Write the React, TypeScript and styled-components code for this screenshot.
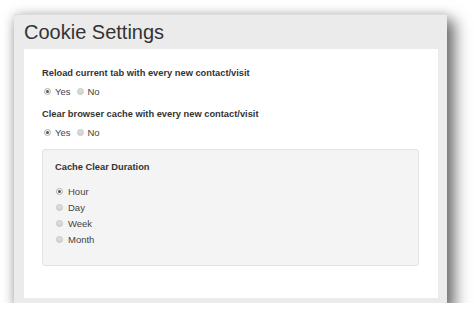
import styled, { createGlobalStyle } from 'styled-components';

const GlobalStyle = createGlobalStyle`
  html, body {
    margin: 0;
    padding: 0;
    background: #ffffff;
  }

  body {
    font-family: "Liberation Sans", Arial, sans-serif;
    color: #333333;
  }
`;

interface Choice {
  label: string;
  checked: boolean;
}

const reloadChoices: Choice[] = [
  { label: 'Yes', checked: true },
  { label: 'No', checked: false },
];

const durations: Choice[] = [
  { label: 'Hour', checked: true },
  { label: 'Day', checked: false },
  { label: 'Week', checked: false },
  { label: 'Month', checked: false },
];

function RadioOption({ label, checked }: Choice) {
  return (
    <Option>
      <Dot $checked={checked} />
      <span>{label}</span>
    </Option>
  );
}

function App() {
  return (
    <>
      <GlobalStyle />
      <Page>
        <Panel>
          <Header>Cookie Settings</Header>
          <Body>
            <FieldLabel>Reload current tab with every new contact/visit</FieldLabel>
            <InlineRow>
              {reloadChoices.map((c) => (
                <RadioOption key={c.label} {...c} />
              ))}
            </InlineRow>

            <FieldLabel $top={8}>Clear browser cache with every new contact/visit</FieldLabel>
            <InlineRow>
              {reloadChoices.map((c) => (
                <RadioOption key={c.label} {...c} />
              ))}
            </InlineRow>

            <Well>
              <WellTitle>Cache Clear Duration</WellTitle>
              <StackList>
                {durations.map((c) => (
                  <RadioOption key={c.label} {...c} />
                ))}
              </StackList>
            </Well>
          </Body>
        </Panel>
      </Page>
    </>
  );
}

export default App;

const Page = styled.div`
  padding: 14px 0 0 14px;
`;

const Panel = styled.div`
  display: flex;
  flex-direction: column;

  width: 433px;
  height: 289px;
  background-color: #ebebeb;
  border-top: 1px solid #dcdcdc;
  box-sizing: border-box;
  box-shadow: 0 0 10px rgba(0, 0, 0, 0.12), 6px 8px 14px 2px rgba(0, 0, 0, 0.55);
`;

const Header = styled.div`
  display: flex;
  align-items: center;

  height: 34px;
  padding-left: 10px;

  font-size: 20px;
  color: #333333;
`;

const Body = styled.div`
  flex-grow: 1;

  margin: 0 9px 5px 10px;
  padding: 17px 19px 0 18px;
  background-color: #ffffff;
`;

const FieldLabel = styled.div<{ $top?: number }>`
  margin-top: ${(p) => p.$top ?? 0}px;
  height: 14px;
  line-height: 14px;

  font-size: 9.3px;
  font-weight: bold;
  color: #333333;
`;

const InlineRow = styled.div`
  display: flex;
  gap: 6px;

  margin-top: 4px;
  padding-left: 2px;
`;

const Option = styled.label`
  display: flex;
  align-items: center;

  height: 15px;
  font-size: 9.5px;
  color: #444444;
`;

const Dot = styled.span<{ $checked: boolean }>`
  position: relative;
  display: inline-block;

  width: 7px;
  height: 7px;
  margin-right: 4px;
  border-radius: 50%;
  border: 1px solid ${(p) => (p.$checked ? '#b0b0b0' : '#c4c4c4')};
  box-sizing: border-box;
  background: ${(p) => (p.$checked ? '#f4f4f4' : 'linear-gradient(#e0e0e0, #d2d2d2)')};

  &::after {
    content: '';
    display: ${(p) => (p.$checked ? 'block' : 'none')};
    position: absolute;
    left: 1px;
    top: 1px;
    width: 3px;
    height: 3px;
    border-radius: 50%;
    background-color: #555555;
  }
`;

const Well = styled.div`
  margin-top: 9px;
  height: 117px;
  padding: 10px 12px 0;
  box-sizing: border-box;

  background-color: #f4f4f4;
  border: 1px solid #e2e2e2;
  border-radius: 3px;
`;

const WellTitle = styled.div`
  height: 14px;
  line-height: 14px;

  font-size: 9.3px;
  font-weight: bold;
  color: #333333;
`;

const StackList = styled.div`
  display: flex;
  flex-direction: column;

  margin-top: 9px;
  padding-left: 1px;

  ${Option} {
    height: 16.2px;
  }

  ${Dot} {
    margin-right: 5px;
  }
`;
